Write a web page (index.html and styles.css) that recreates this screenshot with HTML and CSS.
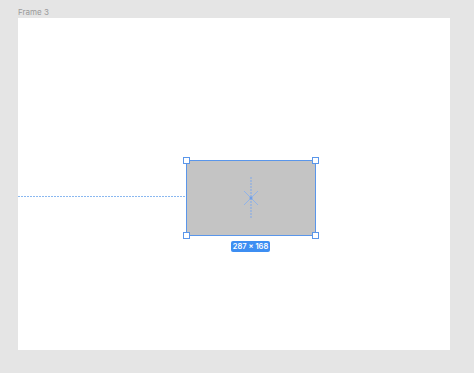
FILE: index.html
```html
<!DOCTYPE html>
<html>
<head>
<meta charset="utf-8">
<link rel="stylesheet" href="styles.css">
</head>
<body>
<div class="stage">
  <div class="frame-title">Frame 3</div>
  <div class="frame">
    <div class="guide"></div>
    <div class="shape">
      <svg class="center-mark" width="24" height="42" viewBox="0 0 24 42">
        <line x1="12" y1="0" x2="12" y2="42" stroke="#7ea8ea" stroke-width="1" stroke-dasharray="2 1"/>
        <line x1="5" y1="14" x2="19" y2="28" stroke="#8fb3ea" stroke-width="1"/>
        <line x1="19" y1="14" x2="5" y2="28" stroke="#8fb3ea" stroke-width="1"/>
        <circle cx="12" cy="21" r="1.5" fill="#6e9ee8"/>
      </svg>
      <span class="handle tl"></span>
      <span class="handle tr"></span>
      <span class="handle bl"></span>
      <span class="handle br"></span>
      <div class="size-label">287 × 168</div>
    </div>
  </div>
</div>
</body>
</html>
```
FILE: styles.css
```css
html, body {
  margin: 0;
  padding: 0;
}
body {
  background: #e5e5e5;
  width: 474px;
  height: 373px;
  overflow: hidden;
  font-family: "Inter", "Liberation Sans", sans-serif;
}
.stage {
  padding: 7px 24px 23px 18px;
}
.frame-title {
  font-size: 8px;
  line-height: 11px;
  color: #9a9a9a;
}
.frame {
  position: relative;
  width: 432px;
  height: 332px;
  background: #ffffff;
}
.guide {
  position: absolute;
  left: 0;
  top: 178px;
  width: 168px;
  height: 1px;
  background: repeating-linear-gradient(to right, #8ab8f0 0 2px, transparent 2px 3px);
}
.shape {
  position: absolute;
  left: 168px;
  top: 142px;
  width: 128px;
  height: 74px;
  background: #c4c4c4;
  border: 1px solid #5a96ea;
}
.center-mark {
  position: absolute;
  left: 52px;
  top: 16px;
}
.handle {
  position: absolute;
  width: 5px;
  height: 5px;
  background: #ffffff;
  border: 1px solid #5a96ea;
}
.handle.tl { left: -4px; top: -4px; }
.handle.tr { right: -4px; top: -4px; }
.handle.bl { left: -4px; bottom: -4px; }
.handle.br { right: -4px; bottom: -4px; }
.size-label {
  position: absolute;
  left: 44px;
  top: 80px;
  width: 39px;
  height: 11px;
  background: #3d8ef2;
  color: #ffffff;
  font-size: 7.5px;
  font-weight: 600;
  line-height: 11px;
  text-align: center;
  border-radius: 2px;
  white-space: nowrap;
}
```
